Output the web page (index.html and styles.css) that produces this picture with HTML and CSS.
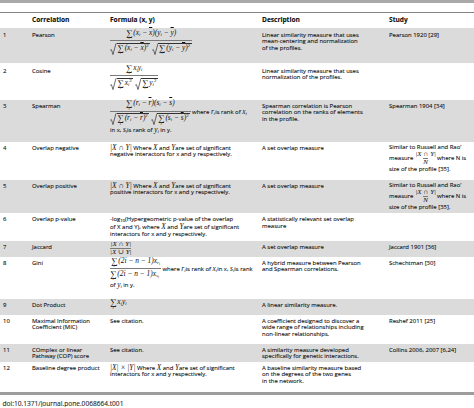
FILE: index.html
```html
<!DOCTYPE html>
<html lang="en">
<head>
<meta charset="utf-8">
<title>Table 1</title>
<link rel="stylesheet" href="styles.css">
</head>
<body>
<div class="page">
  <div class="toprule"></div>
  <div class="table">
    <div class="row head">
      <div class="c num"></div>
      <div class="c name">Correlation</div>
      <div class="c formula">Formula (x, y)</div>
      <div class="c desc">Description</div>
      <div class="c study">Study</div>
    </div>

    <div class="row shade r1">
      <div class="c num">1</div>
      <div class="c name">Pearson</div>
      <div class="c formula">
        <span class="frac">
          <span class="fnum">
            <span class="sum"><span class="sig">∑</span><span class="lim">i</span></span>
            <span class="m expr">(x<span class="sb">i</span> − <span class="ov">x</span>)(y<span class="sb">i</span> − <span class="ov">y</span>)</span>
          </span>
          <span class="fden">
            <span class="rad"><svg class="rsign" viewBox="0 0 5 11" preserveAspectRatio="none"><path d="M0.2 6.6 L1.1 6.1 L2.3 10.6 L4.6 0.4 L5 0.4"/></svg><span class="radicand"><span class="sum"><span class="sig">∑</span><span class="lim">i</span></span><span class="m expr">(x<span class="sb">i</span> − <span class="ov">x</span>)<span class="sp">2</span></span></span></span>
            <span class="rad"><svg class="rsign" viewBox="0 0 5 11" preserveAspectRatio="none"><path d="M0.2 6.6 L1.1 6.1 L2.3 10.6 L4.6 0.4 L5 0.4"/></svg><span class="radicand"><span class="sum"><span class="sig">∑</span><span class="lim">i</span></span><span class="m expr">(y<span class="sb">i</span> − <span class="ov">y</span>)<span class="sp">2</span></span></span></span>
          </span>
        </span>
      </div>
      <div class="c desc">Linear similarity measure that uses<br>mean-centering and normalization<br>of the profiles.</div>
      <div class="c study">Pearson 1920 [29]</div>
    </div>

    <div class="row r2">
      <div class="c num">2</div>
      <div class="c name">Cosine</div>
      <div class="c formula">
        <span class="frac">
          <span class="fnum">
            <span class="sum"><span class="sig">∑</span><span class="lim">i</span></span>
            <span class="m expr">x<span class="sb">i</span>y<span class="sb">i</span></span>
          </span>
          <span class="fden">
            <span class="rad"><svg class="rsign" viewBox="0 0 5 11" preserveAspectRatio="none"><path d="M0.2 6.6 L1.1 6.1 L2.3 10.6 L4.6 0.4 L5 0.4"/></svg><span class="radicand"><span class="sum"><span class="sig">∑</span><span class="lim">i</span></span><span class="m expr">x<span class="sb">i</span><span class="sp">2</span></span></span></span>
            <span class="rad"><svg class="rsign" viewBox="0 0 5 11" preserveAspectRatio="none"><path d="M0.2 6.6 L1.1 6.1 L2.3 10.6 L4.6 0.4 L5 0.4"/></svg><span class="radicand"><span class="sum"><span class="sig">∑</span><span class="lim">i</span></span><span class="m expr">y<span class="sb">i</span><span class="sp">2</span></span></span></span>
          </span>
        </span>
      </div>
      <div class="c desc">Linear similarity measure that uses<br>normalization of the profiles.</div>
      <div class="c study"></div>
    </div>

    <div class="row shade r3">
      <div class="c num">3</div>
      <div class="c name">Spearman</div>
      <div class="c formula">
        <div class="fline">
          <span class="frac">
            <span class="fnum">
              <span class="sum"><span class="sig">∑</span><span class="lim">i</span></span>
              <span class="m expr">(r<span class="sb">i</span> − <span class="ov">r</span>)(s<span class="sb">i</span> − <span class="ov">s</span>)</span>
            </span>
            <span class="fden">
              <span class="rad"><svg class="rsign" viewBox="0 0 5 11" preserveAspectRatio="none"><path d="M0.2 6.6 L1.1 6.1 L2.3 10.6 L4.6 0.4 L5 0.4"/></svg><span class="radicand"><span class="sum"><span class="sig">∑</span><span class="lim">i</span></span><span class="m expr">(r<span class="sb">i</span> − <span class="ov">r</span>)<span class="sp">2</span></span></span></span>
              <span class="rad"><svg class="rsign" viewBox="0 0 5 11" preserveAspectRatio="none"><path d="M0.2 6.6 L1.1 6.1 L2.3 10.6 L4.6 0.4 L5 0.4"/></svg><span class="radicand"><span class="sum"><span class="sig">∑</span><span class="lim">i</span></span><span class="m expr">(s<span class="sb">i</span> − <span class="ov">s</span>)<span class="sp">2</span></span></span></span>
            </span>
          </span>
          <span class="ftext">where <span class="m">r<span class="sb">i</span></span>is rank of <span class="m">x<span class="sb">i</span></span></span>
        </div>
        <div class="after">in x, <span class="m">s<span class="sb">i</span></span>is rank of <span class="m">y<span class="sb">i</span></span> in y.</div>
      </div>
      <div class="c desc">Spearman correlation is Pearson<br>correlation on the ranks of elements<br>in the profile.</div>
      <div class="c study">Spearman 1904 [34]</div>
    </div>

    <div class="row r4">
      <div class="c num">4</div>
      <div class="c name">Overlap negative</div>
      <div class="c formula"><span class="m">|X ∩ Y|</span> Where <span class="m">X</span> and <span class="m">Y</span>are set of significant<br>negative interactors for x and y respectively.</div>
      <div class="c desc">A set overlap measure</div>
      <div class="c study">
        <div>Similar to Russell and Rao’</div>
        <div class="sline">measure <span class="frac small"><span class="fnum"><span class="m">|X ∩ Y|</span></span><span class="fden"><span class="m">N</span></span></span>where N is</div>
        <div>size of the profile [35].</div>
      </div>
    </div>

    <div class="row shade r5">
      <div class="c num">5</div>
      <div class="c name">Overlap positive</div>
      <div class="c formula"><span class="m">|X ∩ Y|</span> Where <span class="m">X</span> and <span class="m">Y</span>are set of significant<br>positive interactors for x and y respectively.</div>
      <div class="c desc">A set overlap measure</div>
      <div class="c study">
        <div>Similar to Russell and Rao’</div>
        <div class="sline">measure <span class="frac small"><span class="fnum"><span class="m">|X ∩ Y|</span></span><span class="fden"><span class="m">N</span></span></span>where N is</div>
        <div>size of the profile [35].</div>
      </div>
    </div>

    <div class="row r6">
      <div class="c num">6</div>
      <div class="c name">Overlap p-value</div>
      <div class="c formula">-log<span class="tsb">10</span>(Hypergeometric p-value of the overlap<br>of X and Y), where <span class="m">X</span> and <span class="m">Y</span>are set of significant<br>interactors for x and y respectively.</div>
      <div class="c desc">A statistically relevant set overlap<br>measure</div>
      <div class="c study"></div>
    </div>

    <div class="row shade r7">
      <div class="c num">7</div>
      <div class="c name">Jaccard</div>
      <div class="c formula"><span class="frac small"><span class="fnum"><span class="m">|X ∩ Y|</span></span><span class="fden"><span class="m">|X ∪ Y|</span></span></span></div>
      <div class="c desc">A set overlap measure</div>
      <div class="c study">Jaccard 1901 [36]</div>
    </div>

    <div class="row r8">
      <div class="c num">8</div>
      <div class="c name">Gini</div>
      <div class="c formula">
        <div class="fline">
          <span class="frac left">
            <span class="fnum">
              <span class="sum"><span class="sig">∑</span><span class="lim">i</span></span>
              <span class="m expr">(2i − n − 1)x<span class="sb">r<span class="ssb">i</span></span></span>
            </span>
            <span class="fden">
              <span class="sum"><span class="sig">∑</span><span class="lim">i</span></span>
              <span class="m expr">(2i − n − 1)x<span class="sb">s<span class="ssb">i</span></span></span>
            </span>
          </span>
          <span class="ftext">where <span class="m">r<span class="sb">i</span></span>is rank of <span class="m">x<span class="sb">i</span></span>in x, <span class="m">s<span class="sb">i</span></span>is rank</span>
        </div>
        <div class="after">of <span class="m">y<span class="sb">i</span></span> in y.</div>
      </div>
      <div class="c desc">A hybrid measure between Pearson<br>and Spearman correlations.</div>
      <div class="c study">Schechtman [30]</div>
    </div>

    <div class="row shade r9">
      <div class="c num">9</div>
      <div class="c name">Dot Product</div>
      <div class="c formula"><span class="fnum solo"><span class="sum"><span class="sig">∑</span><span class="lim">i</span></span><span class="m expr">x<span class="sb">i</span>y<span class="sb">i</span></span></span></div>
      <div class="c desc">A linear similarity measure.</div>
      <div class="c study"></div>
    </div>

    <div class="row r10">
      <div class="c num">10</div>
      <div class="c name">Maximal Information<br>Coefficient (MIC)</div>
      <div class="c formula">See citation.</div>
      <div class="c desc">A coefficient designed to discover a<br>wide range of relationships including<br>non-linear relationships.</div>
      <div class="c study">Reshef 2011 [25]</div>
    </div>

    <div class="row shade r11">
      <div class="c num">11</div>
      <div class="c name">COmplex or linear<br>Pathway (COP) score</div>
      <div class="c formula">See citation.</div>
      <div class="c desc">A similarity measure developed<br>specifically for genetic interactions.</div>
      <div class="c study">Collins 2006, 2007 [6,24]</div>
    </div>

    <div class="row r12">
      <div class="c num">12</div>
      <div class="c name">Baseline degree product</div>
      <div class="c formula"><span class="m">|X| × |Y|</span> Where <span class="m">X</span> and <span class="m">Y</span>are set of significant<br>interactors for x and y respectively.</div>
      <div class="c desc">A baseline similarity measure based<br>on the degrees of the two genes<br>in the network.</div>
      <div class="c study"></div>
    </div>
  </div>
  <div class="doi">doi:10.1371/journal.pone.0068664.t001</div>
</div>
</body>
</html>
```

FILE: styles.css
```css
* { box-sizing: border-box; }

body {
  margin: 0;
  background: #ffffff;
  color: #0e0e0e;
  font-family: "Open Sans", "Noto Sans", sans-serif;
  font-size: 5.95px;
  line-height: 6.75px;
  -webkit-text-stroke: 0.1px #1a1a1a;
}

.page { width: 474px; }

.toprule {
  height: 3px;
  background: #a9a9a9;
}

.table {
  margin-top: 9px;
  border-top: 1px solid #858585;
  border-bottom: 3px solid #9d9d9d;
}

.row {
  display: grid;
  grid-template-columns: 32px 78px 152px 127px 85px;
  align-items: start;
}

.row.shade { background: #dbdbdb; }

.c { padding-top: 2.5px; }
.num { padding-left: 3px; }

.head {
  height: 15px;
  align-items: center;
  font-weight: 700;
  font-size: 6.6px;
}
.head .c { padding-top: 0; }

.r1 { height: 35px; }
.r2 { height: 37px; }
.r3 { height: 42px; }
.r4 { height: 38px; }
.r5 { height: 33px; }
.r6 { height: 28px; }
.r7 { height: 16px; }
.r8 { height: 42px; }
.r9 { height: 16px; }
.r10 { height: 29px; }
.r11 { height: 18px; }
.r12 { height: 30px; }

.r1 .c { padding-top: 3.5px; }
.r2 .c { padding-top: 4.5px; }
.r6 .c { padding-top: 3px; }
.r6 .formula { line-height: 7.2px; padding-top: 2.8px; }
.r1 .formula { padding-top: 1.5px; }
.r2 .formula { padding-top: 1.5px; }
.r3 .formula { padding-top: 0px; }
.r7 .formula { padding-top: 0.3px; }
.r8 .formula { padding-top: 0.5px; }
.r9 .formula { padding-top: 0.3px; }
.r4 .study, .r5 .study { padding-top: 2px; }

/* math */
.m {
  font-family: "Liberation Serif", "DejaVu Serif", serif;
  font-style: italic;
  font-size: 7.4px;
  -webkit-text-stroke: 0;
}
.expr { white-space: nowrap; }
.sb {
  font-size: 4.8px;
  vertical-align: -1.3px;
  line-height: 0;
}
.ssb {
  font-size: 3.6px;
  vertical-align: -0.9px;
}
.sp {
  font-size: 4.8px;
  vertical-align: 2.7px;
  line-height: 0;
  font-style: normal;
}
.tsb {
  font-size: 4.2px;
  vertical-align: -1px;
  line-height: 0;
}
.ov { text-decoration: overline; text-decoration-thickness: 0.5px; }

.sum {
  display: inline-flex;
  flex-direction: column;
  align-items: center;
  margin-right: 1px;
  font-family: "Liberation Serif", "DejaVu Serif", serif;
  -webkit-text-stroke: 0;
}
.sig {
  font-size: 8.9px;
  line-height: 6.6px;
}
.lim {
  font-size: 4.4px;
  line-height: 3.8px;
  font-style: italic;
}

.frac {
  display: inline-flex;
  flex-direction: column;
  align-items: center;
  vertical-align: middle;
}
.frac.left { align-items: stretch; }
.fnum {
  display: flex;
  align-items: flex-start;
  padding: 0 1px 0.5px;
}
.fnum.solo { display: inline-flex; padding: 0; }
.fnum .expr, .fden .expr { line-height: 6.6px; }
.fden {
  display: flex;
  align-items: flex-start;
  border-top: 1px solid #7a7a7a;
  padding-top: 1.3px;
}
.frac.small .fnum { padding: 0 0.5px; }
.frac.small .fden { justify-content: center; padding-top: 0; border-top-width: 0.8px; }
.frac.small .m { line-height: 6.3px; font-size: 7px; }

.rad {
  display: inline-flex;
  align-items: flex-start;
  margin-right: 1.5px;
}
.rad:last-child { margin-right: 0.5px; }
.rsign {
  width: 6.5px;
  height: 12px;
  flex: none;
  fill: none;
  stroke: #333333;
  stroke-width: 0.6;
}
.radicand {
  display: flex;
  align-items: flex-start;
  border-top: 0.6px solid #333333;
  margin-top: 0.2px;
  padding: 0.8px 1.5px 0 0.8px;
}

.fline {
  display: flex;
  align-items: center;
  white-space: nowrap;
}
.ftext { margin-left: 1.5px; }
.after { margin-top: 1px; }

.sline {
  display: flex;
  align-items: center;
  white-space: nowrap;
  margin: 0.5px 0 1px;
}
.sline .frac { margin: 0 0.5px 0 1.5px; }

.doi {
  margin-top: 5.5px;
  padding-left: 2.5px;
  font-size: 6.6px;
  color: #2a2a2a;
}
```
